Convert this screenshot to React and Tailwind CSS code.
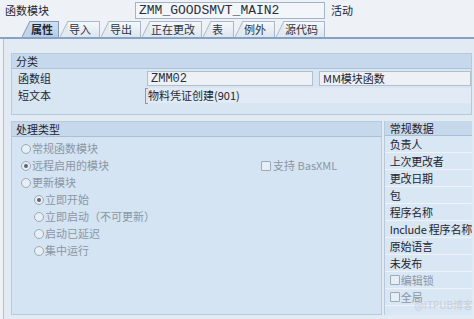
import React from 'react';

const tabs = [
    { label: '属性', w: 'w-[37px]', active: true },
    { label: '导入', w: 'w-[40px]' },
    { label: '导出', w: 'w-[40px]' },
    { label: '正在更改', w: 'w-[60px]' },
    { label: '表', w: 'w-[31px]' },
    { label: '例外', w: 'w-[40px]' },
    { label: '源代码', w: 'w-[49px]' },
];

const generalRows = ['负责人', '上次更改者', '更改日期', '包', '程序名称', 'Include 程序名称', '原始语言', '未发布'];

const Tab = ({ label, w, active }) => (
    <div className={`${w} h-[16px] flex shrink-0`}>
        <svg width="8" height="16" viewBox="0 0 8 16" className="shrink-0">
            <polygon points="0,16 8,0 8,16" fill={active ? '#c3d4e8' : '#e3e9f0'} />
            <line x1="0" y1="16" x2="8" y2="0" stroke={active ? '#7f9bbf' : '#a9b8c8'} strokeWidth="1" />
        </svg>
        <div
            className={`flex-1 flex items-center pl-[1px] border-t border-r leading-none ${
                active
                    ? 'bg-linear-to-b from-[#d3e0ef] to-[#b9cce3] border-[#7f9bbf] text-[#1a2a3c] font-bold'
                    : 'bg-linear-to-b from-[#f5f8fb] to-[#dde5ee] border-[#a9b8c8] text-[#2a3442]'
            }`}
        >
            {label}
        </div>
    </div>
);

const Radio = ({ checked }) => (
    <span className="w-[10px] h-[10px] rounded-full border border-[#9ea9b6] bg-[#e6eef7] flex items-center justify-center shrink-0">
        {checked && <span className="w-[4px] h-[4px] rounded-full bg-[#5d6672]" />}
    </span>
);

const Check = () => (
    <span className="w-[10px] h-[10px] border border-[#9ea9b6] bg-[#e6eef7] rounded-[1px] shrink-0" />
);

const RadioRow = ({ label, checked, indent, children }) => (
    <div className="h-[17px] flex items-center">
        <div className={`flex items-center gap-[1px] ${indent ? 'pl-[22px] w-[249px]' : 'pl-[9px] w-[249px]'}`}>
            <Radio checked={checked} />
            <span className="text-[#8b96a4]">{label}</span>
        </div>
        {children}
    </div>
);

export default function App() {
    return (
        <div className="relative w-[474px] h-[319px] overflow-hidden bg-[#eef2f7] text-[11px] text-[#1e2530] font-['Noto_Sans_CJK_SC','Liberation_Sans',sans-serif] flex flex-col">
            {/* header line */}
            <div className="h-[21px] flex items-center shrink-0">
                <span className="w-[135px] pl-[5px]">函数模块</span>
                <div className="w-[190px] h-[17px] border border-[#a4b3c5] bg-[#f2f5f9] flex items-center pl-[3px] font-['Liberation_Mono',monospace] text-[13px] leading-none text-[#2a2f38]">
                    ZMM_GOODSMVT_MAIN2
                </div>
                <span className="ml-[6px]">活动</span>
            </div>

            {/* tabs */}
            <div className="h-[18px] flex items-end pl-[22px] gap-[1px] border-b-2 border-[#86a3c7] shrink-0">
                {tabs.map((t) => (
                    <Tab key={t.label} {...t} />
                ))}
            </div>

            {/* body */}
            <div className="flex-1 ml-[3px] border-l border-[#b3c4d8] bg-[#e2eaf4] pt-[14px] pl-[7px] pr-[2px] flex flex-col">
                {/* 分类 */}
                <div className="h-[62px] border border-[#b8c9dc] bg-[#d8e5f2] flex flex-col shrink-0">
                    <div className="h-[15px] bg-[#c6d8ec] border-b border-[#aec3da] pl-[4px] flex items-center">分类</div>
                    <div className="h-[17px] mt-[1px] flex items-center">
                        <span className="w-[135px] pl-[6px]">函数组</span>
                        <div className="w-[166px] h-[15px] border border-[#b2bfce] bg-[#edf1f6] flex items-center pl-[3px] font-['Liberation_Mono',monospace] text-[12px] leading-none text-[#2a2f38]">
                            ZMM02
                        </div>
                        <div className="flex-1 ml-[6px] h-[15px] border border-[#b2bfce] bg-[#edf1f6] flex items-center pl-[3px]">
                            MM模块函数
                        </div>
                    </div>
                    <div className="h-[17px] flex items-center">
                        <span className="w-[133px] pl-[6px]">短文本</span>
                        <span className="w-[3px] h-[16px] border-l border-t border-b border-[#d67a92] shrink-0" />
                        <div className="flex-1 h-[15px] bg-[#e2ebf5] flex items-center">物料凭证创建(901)</div>
                    </div>
                </div>

                {/* lower groups */}
                <div className="mt-[6px] h-[194px] flex shrink-0">
                    <div className="w-[377px] border border-[#b8c9dc] bg-[#d5e4f3] flex flex-col">
                        <div className="h-[15px] bg-[#c6d8ec] border-b border-[#a9bfd8] pl-[4px] flex items-center">处理类型</div>
                        <div className="pt-[3px] flex flex-col">
                            <RadioRow label="常规函数模块" />
                            <RadioRow label="远程启用的模块" checked>
                                <div className="flex items-center gap-[2px]">
                                    <Check />
                                    <span className="text-[#8b96a4]">支持 BasXML</span>
                                </div>
                            </RadioRow>
                            <RadioRow label="更新模块" />
                            <RadioRow label="立即开始" checked indent />
                            <RadioRow label="立即启动（不可更新）" indent />
                            <RadioRow label="启动已延迟" indent />
                            <RadioRow label="集中运行" indent />
                        </div>
                    </div>

                    <div className="ml-[2px] flex-1 border-l border-[#b8c9dc] bg-[#d9e6f3] flex flex-col">
                        <div className="h-[15px] bg-[#c6d8ec] border-b border-[#a9bfd8] pl-[5px] flex items-center">常规数据</div>
                        {generalRows.map((r) => (
                            <div key={r} className="h-[17px] border-b border-[#eef3f9] pl-[5px] flex items-center whitespace-nowrap tracking-[-0.2px]">
                                {r}
                            </div>
                        ))}
                        {['编辑锁', '全局'].map((r) => (
                            <div key={r} className="h-[17px] border-b border-[#eef3f9] pl-[5px] flex items-center gap-[1px] text-[#8b96a4]">
                                <Check />
                                {r}
                            </div>
                        ))}
                    </div>
                </div>
            </div>

            <span className="absolute right-[1px] bottom-[7px] text-[10px] text-[#c3cad3] opacity-80">@ITPUB博客</span>
        </div>
    );
}
